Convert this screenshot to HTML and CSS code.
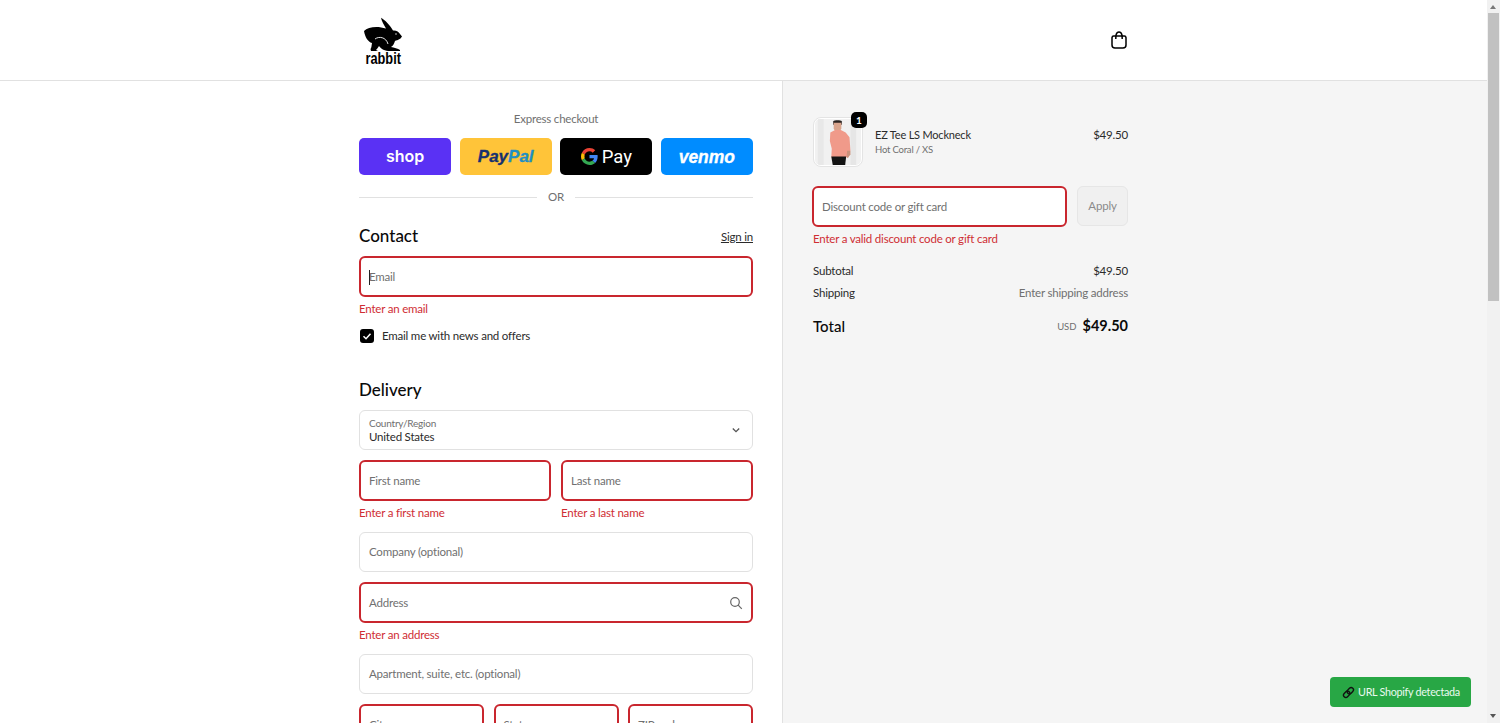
FILE: index.html
```html
<!DOCTYPE html>
<html lang="en">
<head>
<meta charset="utf-8">
<title>Checkout - rabbit</title>
<link rel="stylesheet" href="styles.css">
</head>
<body>
<div class="viewport">
  <div class="page">
    <header class="topbar">
      <div class="topbar-inner">
        <a class="logo">
          <svg class="logo-mark" viewBox="0 0 40 35" width="40" height="35" aria-hidden="true">
            <path fill="#000" d="M18 .7C22 3 27 8 30 13.500C33 13 36 15 37 17L39 19.500L37.500 21.500C35 23 33 23.500 32 24C31 27 30 29 28 30C31 30.500 35 31.500 37 33L37 34L27 34C22 34 18 32 16 29C15 30.500 14 32 13 33L15 34L8 34L7.500 32C8.500 31 8.500 29 9 26C5 25 2 20 1 14C5 10 14 8.500 23 11.500C21 8 18.500 4 18 .7Z"/>
            <path fill="none" stroke="#fff" stroke-width=".9" d="M12 22C16 19 23 20 25 27"/>
            <circle cx="33" cy="17" r=".7" fill="#fff"/>
          </svg>
          <span class="logo-word">rabbit</span>
        </a>
        <svg class="bag" viewBox="0 0 16 18" width="16" height="18" aria-hidden="true">
          <path fill="none" stroke="#000" stroke-width="1.500" d="M2.600 5H13.400C14.300 5 14.900 5.700 15 6.600V14C15 15.700 13.700 17 12 17H4C2.300 17 1 15.700 1 14V6.600C1.100 5.700 1.700 5 2.600 5Z"/>
          <path fill="none" stroke="#000" stroke-width="1.500" d="M4.800 8C4.800 6 4.600 1 8 1S11.200 6 11.200 8"/>
        </svg>
      </div>
    </header>
    <div class="columns">
      <main class="main-col">
        <div class="form">
          <p class="express-title">Express checkout</p>
          <div class="wallets">
            <div class="wallet wallet-shop"><span>shop</span></div>
            <div class="wallet wallet-paypal"><span class="pp-dark">Pay</span><span class="pp-light">Pal</span></div>
            <div class="wallet wallet-gpay">
              <svg viewBox="0 0 48 48" width="17" height="17" aria-hidden="true">
                <path fill="#EA4335" d="M24 9.500c3.500 0 6.700 1.200 9.200 3.600l6.900-6.900C35.900 2.400 30.500 0 24 0 14.600 0 6.500 5.400 2.600 13.200l8 6.200C12.500 13.700 17.800 9.500 24 9.500z"/>
                <path fill="#4285F4" d="M47 24.500c0-1.600-.1-3.100-.4-4.500H24v9h12.900c-.6 3-2.200 5.500-4.800 7.200l7.700 6C44.300 38 47 31.800 47 24.500z"/>
                <path fill="#FBBC05" d="M10.600 28.600c-.5-1.400-.8-3-.8-4.600s.3-3.200.8-4.600l-8-6.200C.9 16.500 0 20.100 0 24s.9 7.500 2.600 10.800l8-6.200z"/>
                <path fill="#34A853" d="M24 48c6.500 0 11.900-2.100 15.900-5.800l-7.700-6c-2.200 1.500-4.900 2.300-8.200 2.300-6.200 0-11.500-4.200-13.400-9.900l-8 6.200C6.500 42.600 14.600 48 24 48z"/>
              </svg>
              <span>Pay</span>
            </div>
            <div class="wallet wallet-venmo"><span>venmo</span></div>
          </div>
          <div class="divider"><span>OR</span></div>

          <div class="section-head">
            <h2>Contact</h2>
            <a class="signin">Sign in</a>
          </div>
          <div class="field field-error field-first"><span class="caret"></span><span class="ph">Email</span></div>
          <p class="error">Enter an email</p>
          <label class="check">
            <span class="box"><svg viewBox="0 0 14 14" width="14" height="14" aria-hidden="true"><path d="M3.500 7.300L6 9.700L10.500 4.700" fill="none" stroke="#fff" stroke-width="1.500"/></svg></span>
            <span>Email me with news and offers</span>
          </label>

          <h2 class="delivery">Delivery</h2>
          <div class="field field-select field-first">
            <div class="select-text">
              <span class="select-label">Country/Region</span>
              <span class="select-value">United States</span>
            </div>
            <svg class="field-icon" viewBox="0 0 14 14" width="14" height="14" aria-hidden="true"><path d="M3.800 5.500L7 8.700L10.200 5.500" fill="none" stroke="#555" stroke-width="1.300"/></svg>
          </div>
          <div class="row row-2 gap-10">
            <div>
              <div class="field field-error"><span class="ph">First name</span></div>
              <p class="error">Enter a first name</p>
            </div>
            <div>
              <div class="field field-error"><span class="ph">Last name</span></div>
              <p class="error">Enter a last name</p>
            </div>
          </div>
          <div class="field gap-11"><span class="ph">Company (optional)</span></div>
          <div class="field field-error gap-10">
            <span class="ph">Address</span>
            <svg class="field-icon" viewBox="0 0 14 14" width="14" height="14" aria-hidden="true"><circle cx="6" cy="6" r="4.300" fill="none" stroke="#666" stroke-width="1.200"/><path d="M9.200 9.200L12.800 12.800" stroke="#666" stroke-width="1.200"/></svg>
          </div>
          <p class="error">Enter an address</p>
          <div class="field gap-11"><span class="ph">Apartment, suite, etc. (optional)</span></div>
          <div class="row row-3 gap-10">
            <div class="field field-error"><span class="ph">City</span></div>
            <div class="field field-error"><span class="ph">State</span></div>
            <div class="field field-error"><span class="ph">ZIP code</span></div>
          </div>
        </div>
      </main>
      <aside class="side-col">
        <div class="summary">
          <div class="item">
            <div class="thumb">
              <svg viewBox="0 0 48 48" width="46" height="46" aria-hidden="true">
                <rect width="48" height="48" fill="#f1f1f1"/>
                <rect x="3" width="6" height="48" fill="#e8e8e8"/>
                <rect x="37" width="6" height="48" fill="#e6e6e6"/>
                <path fill="#2a2320" d="M19 2.500C20 1 27 1 28 2.500L28 6H19z"/>
                <path fill="#d9a48c" d="M19.500 4h8v6l-1 2h-6l-1-2z"/>
                <path fill="#f09a8a" d="M16 14l5-2.500h6l5 2.500 4 5 1 14-3 1 1 6H17l.5-9-2-8z"/>
                <path fill="#c9917c" d="M33.500 33l3.500 0 0 4-3 4-1-2z"/>
                <path fill="#141414" d="M17 39h15.500l-1 9H18.500z"/>
              </svg>
            </div>
            <span class="badge">1</span>
            <div class="item-text">
              <span class="item-name">EZ Tee LS Mockneck</span>
              <span class="item-variant">Hot Coral / XS</span>
            </div>
            <span class="item-price">$49.50</span>
          </div>
          <div class="discount">
            <div class="field field-error discount-input"><span class="ph">Discount code or gift card</span></div>
            <button class="apply" type="button">Apply</button>
          </div>
          <p class="error error-discount">Enter a valid discount code or gift card</p>
          <div class="line line-first"><span>Subtotal</span><span>$49.50</span></div>
          <div class="line line-second"><span>Shipping</span><span class="muted">Enter shipping address</span></div>
          <div class="total">
            <span class="total-label">Total</span>
            <span class="total-value"><small>USD</small><strong>$49.50</strong></span>
          </div>
        </div>
      </aside>
    </div>
  </div>
  <div class="scrollbar" aria-hidden="true">
    <span class="arrow arrow-up"></span>
    <span class="thumb-bar"></span>
    <span class="arrow arrow-down"></span>
  </div>
  <div class="toast">
    <svg viewBox="0 0 14 14" width="13" height="13" aria-hidden="true">
      <g fill="none" stroke="#111" stroke-width="1.500" transform="rotate(-45 7 7)">
        <rect x="0.500" y="4.500" width="7.500" height="5" rx="2.500"/>
        <rect x="6" y="4.500" width="7.500" height="5" rx="2.500"/>
      </g>
    </svg>
    <span>URL Shopify detectada</span>
  </div>
</div>
</body>
</html>
```
FILE: styles.css
```css
* { box-sizing: border-box; }
html, body { margin: 0; padding: 0; height: 100%; overflow: hidden; }
body {
  font-family: Lato, "Noto Sans", "Liberation Sans", sans-serif;
  font-size: 11.500px;
  letter-spacing: -.2px;
  line-height: 16px;
  color: #2b2b2b;
  background: #fff;
}
p, h2 { margin: 0; }
.viewport { position: relative; display: flex; width: 1500px; height: 723px; overflow: hidden; }
.page { width: 1487px; height: 723px; display: flex; flex-direction: column; }

/* header */
.topbar { height: 81px; flex: none; border-bottom: 1px solid #e1e1e1; }
.topbar-inner { margin-left: 359px; width: 769px; height: 80px; display: flex; align-items: center; justify-content: space-between; }
.logo { display: flex; flex-direction: column; align-items: center; margin-left: 4px; width: 40px; margin-top: 1px; }
.logo-mark { display: block; }
.logo-word { font-family: "Liberation Sans", sans-serif; font-weight: 700; font-size: 16px; letter-spacing: 0; line-height: 13px; color: #000; transform: scaleX(.8); margin-top: 0; }
.bag { display: block; margin-right: 1px; }

/* columns */
.columns { flex: 1; display: flex; min-height: 0; }
.main-col { width: 783px; flex: none; border-right: 1px solid #e1e1e1; padding: 30px 0 0 359px; }
.side-col { flex: 1; background: #f5f5f5; padding: 36px 0 0 29px; }
.form { width: 394px; }

/* express checkout */
.express-title { text-align: center; color: #707070; }
.wallets { margin-top: 11px; display: grid; grid-template-columns: repeat(4, 1fr); column-gap: 8.330px; }
.wallet { height: 37px; border-radius: 5px; display: flex; align-items: center; justify-content: center; color: #fff; letter-spacing: 0; }
.wallet-shop { background: #5a31f4; font-family: Inter, sans-serif; font-weight: 600; font-size: 16px; padding-bottom: 2px; }
.wallet-paypal { background: #ffc439; font-family: "Liberation Sans", sans-serif; font-style: italic; font-weight: 700; font-size: 17px; -webkit-text-stroke: .3px currentColor; }
.pp-dark { color: #17316f; }
.pp-light { color: #1f8fc4; }
.wallet-gpay { background: #000; font-family: Roboto, sans-serif; font-size: 18.500px; font-weight: 400; gap: 4px; }
.wallet-venmo { background: #008cff; font-family: "Liberation Sans", sans-serif; font-style: italic; font-weight: 700; font-size: 17.500px; -webkit-text-stroke: .3px currentColor; }
.divider { margin-top: 14px; display: flex; align-items: center; gap: 11px; color: #707070; }
.divider::before, .divider::after { content: ""; flex: 1; height: 1px; background: #e1e1e1; }

/* sections */
h2 { font-size: 17px; line-height: 24px; font-weight: 500; letter-spacing: 0; color: #0a0a0a; }
.section-head { margin-top: 19px; display: flex; justify-content: space-between; align-items: center; }
.signin { color: #2b2b2b; text-decoration: underline; margin-top: 2px; }
.delivery { margin-top: 34px; }

/* fields */
.field { position: relative; height: 40px; border: 1px solid #e1e1e1; border-radius: 6px; background: #fff; display: flex; align-items: center; justify-content: space-between; padding: 0 9px; }
.field-error { height: 41px; border: 2px solid #c9262e; padding: 0 8px; }
.field-first { margin-top: 8px; }
.gap-10 { margin-top: 10px; }
.gap-11 { margin-top: 11px; }
.ph { color: #707070; white-space: nowrap; }
.caret { position: absolute; left: 8px; top: 12px; width: 1px; height: 15px; background: #222; }
.field-icon { display: block; }
.error { margin-top: 4px; color: #cf2d33; }
.row { display: grid; }
.row-2 { grid-template-columns: 192px 192px; column-gap: 10px; }
.row-3 { grid-template-columns: repeat(3, 1fr); column-gap: 9.500px; }

/* checkbox */
.check { margin-top: 11px; display: flex; align-items: center; gap: 8px; }
.box { width: 14px; height: 14px; margin-left: 1px; border-radius: 3px; background: #000; display: block; }
.box svg { display: block; }

/* select */
.select-text { display: flex; flex-direction: column; }
.select-label { font-size: 10px; line-height: 13px; color: #707070; }
.select-value { line-height: 14px; color: #2b2b2b; }

/* summary */
.summary { width: 316px; }
.item { position: relative; display: flex; height: 50px; }
.thumb { width: 50px; height: 50px; flex: none; margin-left: 1px; padding: 1px; border: 1px solid #e4e4e4; border-radius: 8px; background: #fff; }
.thumb svg { display: block; border-radius: 5px; }
.badge { position: absolute; left: 39px; top: -5px; width: 16px; height: 16px; border-radius: 5px; background: #000; color: #fff; font-size: 10px; font-weight: 700; letter-spacing: 0; line-height: 16px; text-align: center; }
.item-text { margin-left: 12px; flex: 1; display: flex; flex-direction: column; padding-top: 10px; }
.item-name { font-size: 11px; line-height: 16px; }
.item-variant { font-size: 9.500px; line-height: 14px; margin-top: 0; color: #707070; }
.item-price { padding-top: 10px; line-height: 16px; }
.discount { margin-top: 19px; display: flex; justify-content: space-between; }
.discount-input { width: 255px; }
.apply { width: 51px; height: 40px; padding: 0; border: 1px solid #e6e6e6; border-radius: 6px; background: #f0f0f0; color: #8a8a8a; font: inherit; letter-spacing: inherit; }
.error-discount { margin-top: 4px; padding-left: 1px; }
.line { display: flex; justify-content: space-between; padding-left: 1px; }
.line-first { margin-top: 16px; }
.line-second { margin-top: 6px; }
.muted { color: #707070; }
.total { margin-top: 13px; height: 24px; padding-left: 1px; display: flex; justify-content: space-between; align-items: center; }
.total-label { font-size: 15px; font-weight: 500; letter-spacing: 0; color: #0a0a0a; }
.total-value { display: flex; align-items: center; gap: 6px; }
.total-value small { font-size: 9.500px; letter-spacing: 0; color: #707070; padding-top: 2px; }
.total-value strong { font-size: 14.500px; font-weight: 700; letter-spacing: 0; color: #0a0a0a; }

/* scrollbar */
.scrollbar { width: 13px; height: 723px; flex: none; background: #f1f1f1; position: relative; }
.arrow { position: absolute; left: 3px; width: 0; height: 0; border-left: 3.500px solid transparent; border-right: 3.500px solid transparent; }
.arrow-up { top: 5px; border-bottom: 4px solid #777; }
.arrow-down { bottom: 5px; border-top: 4px solid #555; }
.thumb-bar { position: absolute; top: 13px; left: 1px; width: 11px; height: 288px; background: #c1c1c1; }

/* toast */
.toast { position: absolute; left: 1330px; top: 677px; width: 141px; height: 30px; border-radius: 4px; background: #28a745; color: #eafaf0; font-size: 10.800px; letter-spacing: -.3px; display: flex; align-items: center; gap: 3px; padding-left: 12px; white-space: nowrap; }
.toast svg { display: block; flex: none; }
```
